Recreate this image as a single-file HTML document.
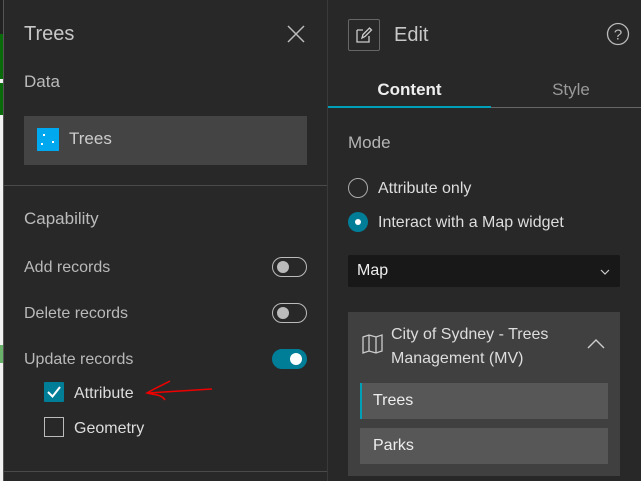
<!DOCTYPE html>
<html><head><meta charset="utf-8"><style>
*{margin:0;padding:0;box-sizing:border-box}
body{width:641px;height:481px;overflow:hidden;background:#282828;font-family:"Liberation Sans",sans-serif;position:relative;color:#c8c8c8}
.a{position:absolute}
.t{font-size:16px;color:#b9b9b9}
.tog{position:absolute;width:35px;height:20px;border:1.5px solid #bbb;border-radius:10px;left:272px}
.tog i{position:absolute;width:12px;height:12px;border-radius:50%;background:#bbb;left:4px;top:2.5px}
</style></head><body>
<div class="a" style="left:0;top:0;width:3px;height:481px;background:#f2f2f2"></div>
<div class="a" style="left:0;top:0;width:3px;height:34px;background:#222"></div>
<div class="a" style="left:0;top:34px;width:3px;height:45px;background:#0a6b0a"></div>
<div class="a" style="left:0;top:83px;width:3px;height:32px;background:#0a6b0a"></div>
<div class="a" style="left:0;top:345px;width:3px;height:18px;background:#6ab26a"></div>
<div class="a" style="left:3px;top:0;width:1px;height:481px;background:#555"></div>
<div class="a" style="left:327px;top:0;width:1px;height:481px;background:#3a3a3a"></div>

<div class="a" style="left:24px;top:23px;font-size:20px;color:#c8c8c8">Trees</div>
<svg class="a" style="left:287px;top:25px" width="18" height="18"><path d="M1 1L17 17M17 1L1 17" stroke="#bbb" stroke-width="1.5"/></svg>
<div class="a" style="left:24px;top:72px;font-size:17px;color:#bbb">Data</div>
<div class="a" style="left:24px;top:116px;width:283px;height:49px;background:#444"></div>
<div class="a" style="left:37px;top:128px;width:22px;height:23px;background:#00a8f0"></div>
<div class="a" style="left:43px;top:134px;width:2px;height:2px;background:#fff"></div>
<div class="a" style="left:41px;top:143px;width:2px;height:2px;background:#fff"></div>
<div class="a" style="left:52px;top:141px;width:2px;height:2px;background:#fff"></div>
<div class="a" style="left:69px;top:129px;font-size:17px;color:#ccc">Trees</div>
<div class="a" style="left:4px;top:185px;width:323px;height:1px;background:#4a4a4a"></div>
<div class="a" style="left:24px;top:209px;font-size:17px;color:#bbb">Capability</div>
<div class="a t" style="left:24px;top:259px">Add records</div>
<div class="tog" style="top:257px"><i></i></div>
<div class="a t" style="left:24px;top:305px">Delete records</div>
<div class="tog" style="top:303px"><i></i></div>
<div class="a t" style="left:24px;top:351px">Update records</div>
<div class="tog" style="top:349px;background:#007e98;border-color:#007e98"><i style="background:#fff;left:17px"></i></div>
<div class="a" style="left:44px;top:382px;width:20px;height:20px;background:#007e98;border-radius:1px"></div>
<svg class="a" style="left:44px;top:382px" width="20" height="20"><path d="M4 10L8.5 14.5L16 5" stroke="#fff" stroke-width="2" fill="none"/></svg>
<div class="a" style="left:74px;top:385px;font-size:16px;color:#ddd">Attribute</div>
<svg class="a" style="left:140px;top:378px" width="80" height="30"><path d="M30 3C25 6 15 10 7 15C14 17 21 16 25 22M8 15C25 14 55 12 72 11" stroke="#e00" stroke-width="1.6" fill="none"/></svg>
<div class="a" style="left:44px;top:417px;width:20px;height:20px;border:1.5px solid #bbb"></div>
<div class="a" style="left:74px;top:420px;font-size:16px;color:#ddd">Geometry</div>
<div class="a" style="left:4px;top:471px;width:323px;height:1px;background:#4a4a4a"></div>

<div class="a" style="left:348px;top:19px;width:32px;height:32px;border:1px solid #666;border-radius:2px"></div>
<svg class="a" style="left:354px;top:25px" width="20" height="20"><path d="M3 5H9M3 5V17H15V11" stroke="#ccc" stroke-width="1.3" fill="none"/><path d="M8 13L9 9.5L15.5 3L17.5 5L11 11.5Z" stroke="#ccc" stroke-width="1.3" fill="none"/></svg>
<div class="a" style="left:394px;top:24px;font-size:20px;color:#c8c8c8">Edit</div>
<svg class="a" style="left:606px;top:22px" width="24" height="24"><circle cx="12" cy="12" r="10.5" stroke="#bbb" stroke-width="1.3" fill="none"/><text x="12" y="17.5" font-size="15" fill="#bbb" text-anchor="middle" font-family="Liberation Sans">?</text></svg>
<div class="a" style="left:328px;top:80px;width:163px;text-align:center;font-size:17px;color:#eee;font-weight:bold">Content</div>
<div class="a" style="left:491px;top:80px;width:160px;text-align:center;font-size:17px;color:#999">Style</div>
<div class="a" style="left:328px;top:107px;width:313px;height:1px;background:#666"></div>
<div class="a" style="left:328px;top:106px;width:163px;height:2px;background:#00a0b8"></div>
<div class="a" style="left:348px;top:133px;font-size:17px;color:#b5b5b5">Mode</div>
<div class="a" style="left:348px;top:178px;width:20px;height:20px;border:1.5px solid #aaa;border-radius:50%"></div>
<div class="a" style="left:378px;top:180px;font-size:16px;color:#ddd">Attribute only</div>
<div class="a" style="left:348px;top:212px;width:20px;height:20px;background:#007e98;border-radius:50%"></div>
<div class="a" style="left:355px;top:219px;width:6px;height:6px;background:#fff;border-radius:50%"></div>
<div class="a" style="left:378px;top:214px;font-size:16px;color:#ddd">Interact with a Map widget</div>
<div class="a" style="left:348px;top:255px;width:272px;height:32px;background:#181818;border-radius:2px"></div>
<div class="a" style="left:357px;top:262px;font-size:16px;color:#eee">Map</div>
<svg class="a" style="left:600px;top:268px" width="10" height="8"><path d="M1 2L5 6L9 2" stroke="#ccc" stroke-width="1.2" fill="none"/></svg>
<div class="a" style="left:348px;top:312px;width:272px;height:164px;background:#404040"></div>
<svg class="a" style="left:362px;top:334px" width="22" height="20"><path d="M1 3L7 1L14 3L20 1V17L14 19L7 17L1 19Z M7 1V17M14 3V19" stroke="#ccc" stroke-width="1.3" fill="none"/></svg>
<div class="a" style="left:391px;top:323px;font-size:16px;color:#ddd;line-height:24px">City of Sydney - Trees<br>Management (MV)</div>
<svg class="a" style="left:587px;top:338px" width="18" height="12"><path d="M1 10L9 2L17 10" stroke="#ccc" stroke-width="1.4" fill="none"/></svg>
<div class="a" style="left:360px;top:383px;width:248px;height:36px;background:#575757;border-left:2px solid #00a0b8"></div>
<div class="a" style="left:373px;top:392px;font-size:16px;color:#eee">Trees</div>
<div class="a" style="left:360px;top:428px;width:248px;height:36px;background:#575757"></div>
<div class="a" style="left:373px;top:437px;font-size:16px;color:#eee">Parks</div>
</body></html>
